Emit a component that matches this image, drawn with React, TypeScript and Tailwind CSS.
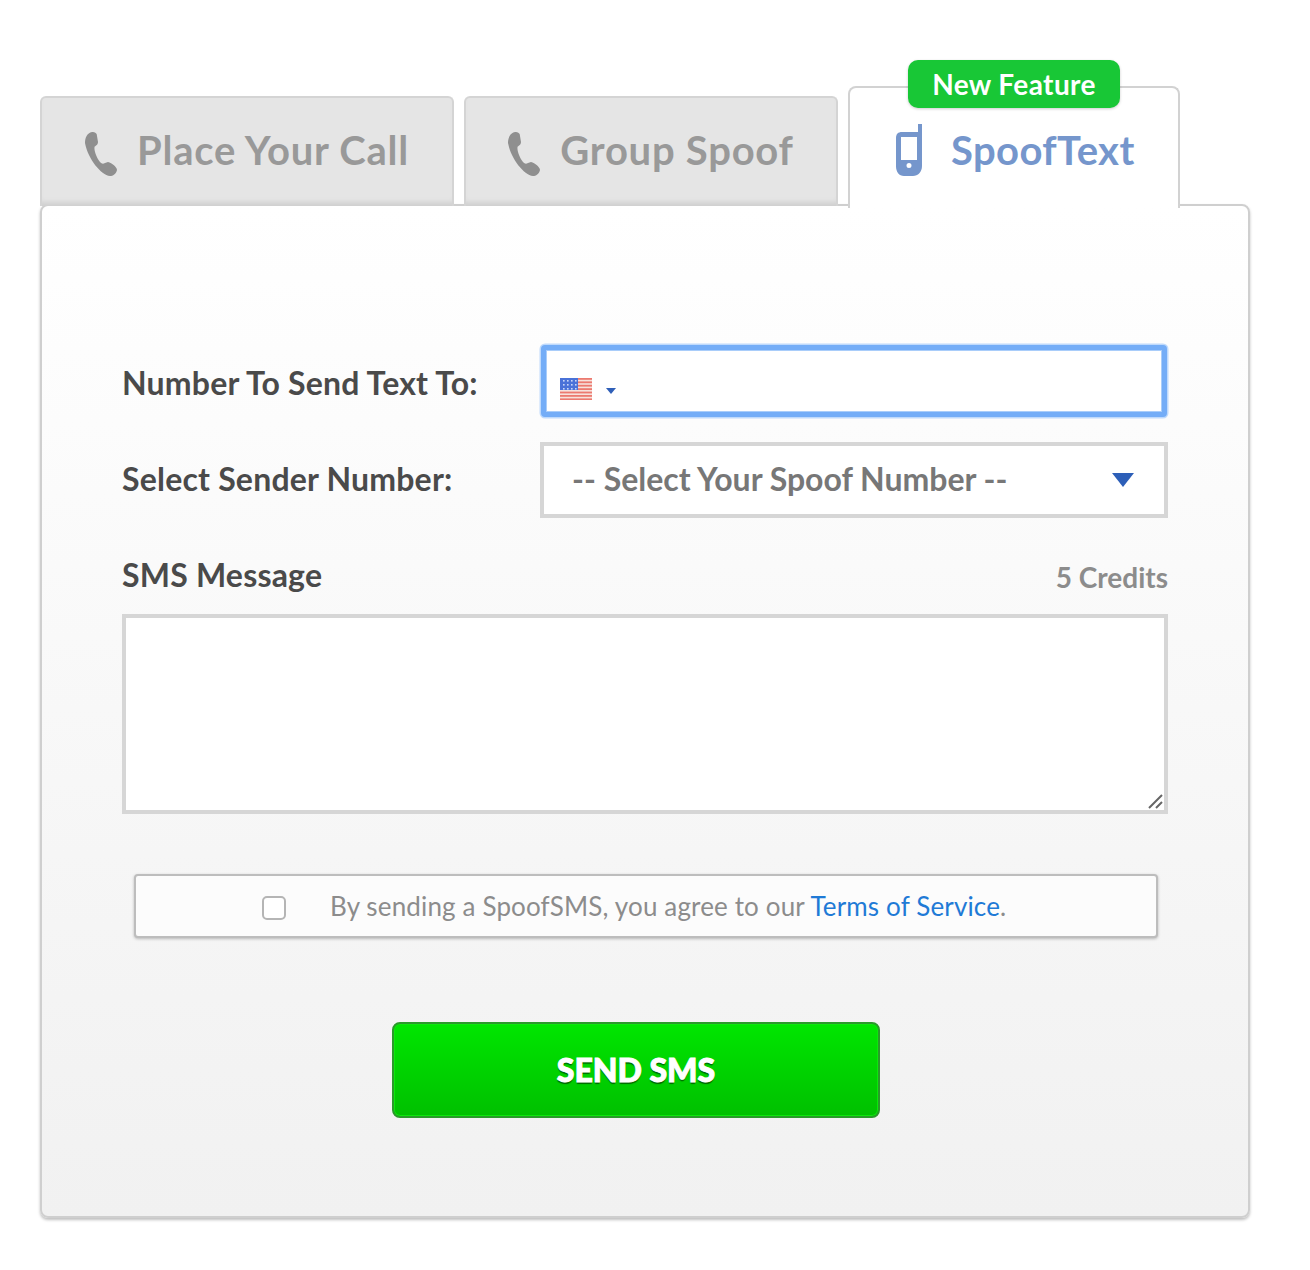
const FONT = "font-['Lato','Open_Sans',sans-serif]";

function Handset() {
  return (
    <svg width="32" height="44" viewBox="0 0 32 44" className="mt-[2px] shrink-0">
      <path
        fill="#8f8f8f"
        d="M7 0C10 0 12 1 12 4L13 10C13 13 10 14 9.5 15C9 18 11 25 15 30C17 32 18 32 20 31L23 30C27 31 32 35 32 38C31 42 28 44 25 44C16 43 3 27 0 11C0 6 2 1 7 0Z"
      />
    </svg>
  );
}

function CellPhone() {
  return (
    <svg width="28" height="52" viewBox="0 0 28 52" className="shrink-0">
      <path
        fill="#7596cc"
        fillRule="evenodd"
        d="M23 0H27V42C27 48 23 52 18 52H9C4 52 1 48 1 42V14C1 10 3 8 7 8H23ZM6 13V36H22V13ZM14 39A2.5 2.5 0 1 0 14 44A2.5 2.5 0 1 0 14 39Z"
      />
    </svg>
  );
}

function Flag() {
  const stripes = [0, 3.4, 6.8, 10.2, 13.6, 17, 20.4];
  return (
    <svg width="32" height="22" viewBox="0 0 32 22">
      <rect width="32" height="22" fill="#f7e2dc" />
      {stripes.map((y) => (
        <rect key={y} y={y} width="32" height="1.8" fill="#ec7a70" />
      ))}
      <rect width="18" height="12" fill="#4a72d8" />
      {[2, 6, 10].map((y) =>
        [3, 7, 11, 15].map((x) => <rect key={`${x}-${y}`} x={x} y={y} width="1.6" height="1.6" fill="#c9d6f5" />)
      )}
    </svg>
  );
}

function Tab({ label, className }: { label: string; className: string }) {
  return (
    <div
      className={`flex h-[110px] items-center justify-center gap-[20px] rounded-t-[6px] border-2 border-b-0 border-[#d4d4d4] bg-[#e5e5e5] pt-[2px] shadow-[inset_0_-7px_5px_-3px_#d0d0d0] ${className}`}
    >
      <Handset />
      <span className="pb-[6px] text-[40px] font-bold leading-none tracking-[0.75px] text-[#999999]">{label}</span>
    </div>
  );
}

export default function App() {
  return (
    <div className={`${FONT} h-[1270px] w-[1310px] bg-white pl-[40px] pt-[60px]`}>
      <div className="relative z-10 flex h-[148px] items-end gap-[10px]">
        <Tab label="Place Your Call" className="mb-[2px] w-[414px]" />
        <Tab label="Group Spoof" className="mb-[2px] w-[374px]" />
        <div className="relative h-[122px] w-[332px] rounded-t-[8px] border-2 border-b-0 border-[#d2d2d2] bg-white">
          <div className="absolute left-[58px] top-[-28px] flex h-[48px] w-[212px] items-center justify-center rounded-[10px] bg-[#18c736] text-[28px] font-bold tracking-[0.4px] text-white shadow-[0_1px_3px_rgba(0,0,0,0.2)]">
            New Feature
          </div>
          <div className="flex items-center gap-[28px] pl-[45px] pt-[36px]">
            <CellPhone />
            <span className="text-[40px] font-bold leading-none tracking-[0.4px] text-[#7596cc]">SpoofText</span>
          </div>
        </div>
      </div>

      <div className="mt-[-4px] h-[1014px] w-[1210px] rounded-[8px] border-2 border-[#cfcfcf] bg-gradient-to-b from-white to-[#f1f1f1] pl-[80px] pr-[80px] pt-[138px] shadow-[0_2px_3px_rgba(0,0,0,0.25)]">
        <div className="flex h-[74px] items-center justify-between">
          <label className="pt-[4px] text-[32px] font-bold tracking-[0.2px] text-[#4a4a4a]">Number To Send Text To:</label>
          <div className="mr-[1px] flex h-[72px] w-[626px] items-end rounded-[4px] border-[5px] border-[#74adf7] bg-white pb-[12px] pl-[14px] shadow-[0_0_0_1.5px_#bfdafc,inset_0_0_0_1px_#a9cdfa]">
            <Flag />
            <svg width="10" height="6" viewBox="0 0 10 6" className="mb-[6px] ml-[14px]">
              <path d="M0 0H10L5 6Z" fill="#2f5fb8" />
            </svg>
          </div>
        </div>

        <div className="mt-[24px] flex h-[76px] items-center justify-between">
          <label className="pb-[2px] text-[32px] font-bold tracking-[0.2px] text-[#4a4a4a]">Select Sender Number:</label>
          <div className="flex h-[76px] w-[628px] items-center justify-between border-4 border-[#d6d6d6] bg-white pl-[28px] pr-[30px]">
            <span className="pb-[2px] text-[32px] font-bold text-[#777777]">-- Select Your Spoof Number --</span>
            <svg width="22" height="14" viewBox="0 0 22 14">
              <path d="M0 0H22L11 14Z" fill="#2d5fb8" />
            </svg>
          </div>
        </div>

        <div className="mt-[34px] flex h-[50px] items-center justify-between">
          <label className="pb-[4px] text-[32px] font-bold tracking-[0.2px] text-[#4a4a4a]">SMS Message</label>
          <span className="pb-[1px] text-[28px] font-bold text-[#8c8c8c]">5 Credits</span>
        </div>
        <div className="relative mt-[12px] h-[200px] w-[1046px]">
          <textarea className="block h-full w-full resize-none border-4 border-[#d6d6d6] bg-white" />
          <svg width="16" height="16" viewBox="0 0 16 16" className="absolute bottom-[4px] right-[4px]">
            <path d="M1 14L14 1M8 14L14 8" stroke="#666666" strokeWidth="2" fill="none" />
          </svg>
        </div>

        <div className="ml-[12px] mt-[60px] flex h-[64px] w-[1024px] items-center rounded-[4px] border-2 border-[#bdbdbd] bg-[#fcfcfc] pl-[126px] shadow-[0_1px_3px_rgba(0,0,0,0.25)]">
          <input type="checkbox" className="mt-[4px] h-[24px] w-[24px] appearance-none rounded-[5px] border-2 border-[#b5b5b5] bg-white" />
          <p className="ml-[44px] text-[26px] tracking-[0.15px] text-[#8c8c8c]">
            By sending a SpoofSMS, you agree to our <a className="text-[#1f7ad6]">Terms of Service</a>.
          </p>
        </div>

        <button className="ml-[270px] mt-[84px] block h-[96px] w-[488px] rounded-[8px] border-2 border-[#2a9a2a] bg-gradient-to-b from-[#00e600] to-[#00c000] text-[32px] font-black text-white shadow-[inset_0_0_0_1px_#0be80b] [-webkit-text-stroke:1px_white] [text-shadow:0_2px_1px_rgba(0,0,0,0.5)]">
          SEND SMS
        </button>
      </div>
    </div>
  );
}
